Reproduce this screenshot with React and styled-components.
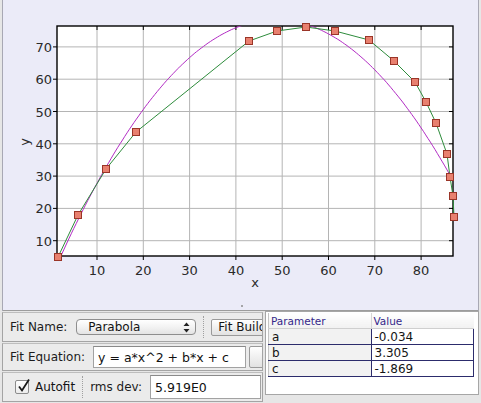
import styled, { createGlobalStyle } from 'styled-components';

const GlobalStyle = createGlobalStyle`
  html, body { margin: 0; padding: 0; background: #e6e6e6; }
  body {
    font-family: "DejaVu Sans", "Noto Sans", sans-serif;
    font-size: 12px;
    color: #141414;
  }
`;

// plot scale (data -> pixels, page coordinates)
const X = (x) => 50.7 + 4.63 * x;
const Y = (y) => 273 - 3.23 * y;
const PLOT = { left: 57, top: 26, right: 453, bottom: 256 };

const points = [
  [58, 257], [78, 215], [106, 169], [136, 132], [249, 41], [277, 31],
  [306, 27], [335, 31], [369, 40], [394, 61], [415, 82], [426, 102],
  [436, 123], [447, 154], [450, 177], [453, 196], [454, 217],
];

const fit = { a: -0.034, b: 3.305, c: -1.869 };

function parabolaPath() {
  const d = [];
  for (let x = 1; x <= 87.5; x += 0.5) {
    const y = fit.a * x * x + fit.b * x + fit.c;
    d.push(`${d.length ? 'L' : 'M'}${X(x).toFixed(1)},${Y(y).toFixed(1)}`);
  }
  return d.join(' ');
}

const Window = styled.div`
  width: 481px;
  height: 403px;
  display: flex;
  flex-direction: column;
  overflow: hidden;
  background: #e6e6e6;
`;

const ChartPane = styled.div`
  height: 311px;
  margin: 0 2px;
  border-left: 1px solid #a8a8b4;
  border-right: 1px solid #a8a8b4;
  background: #ebebf8;
  display: flex;
  flex-direction: column;

  svg {
    display: block;
  }
`;

const Divider = styled.div`
  flex: 1;
  display: flex;
  justify-content: center;
  align-items: center;
  border-bottom: 1px solid #9c9c9c;
`;

const Grip = styled.span`
  width: 2px;
  height: 2px;
  margin-left: 2px;
  border-radius: 1px;
  background: #8c8c8c;
`;

const AxisText = styled.text`
  font-family: "DejaVu Sans", sans-serif;
  font-size: 13px;
  fill: #2a2a2a;
`;

const BottomPane = styled.div`
  flex: 1;
  display: flex;
  min-height: 0;
`;

const Controls = styled.div`
  width: 261px;
  margin-left: 2px;
  display: flex;
  flex-direction: column;
  gap: 1px;
  padding-top: 1px;
`;

const Row = styled.div`
  height: ${(p) => p.$h}px;
  box-sizing: border-box;
  display: flex;
  align-items: center;
  padding-left: ${(p) => p.$pad || 7}px;
  border: 1px solid #a4a4a4;
  border-top-color: #bdbdbd;
  background: #ebebeb;
  overflow: hidden;
  white-space: nowrap;

  > * {
    flex: none;
  }
`;

const Label = styled.span`
  margin-right: ${(p) => p.$gap}px;
  color: #1c1c1c;
`;

const Combo = styled.div`
  width: 120px;
  height: 16px;
  box-sizing: border-box;
  border: 1px solid #8e8e8e;
  border-radius: 4px;
  background: linear-gradient(#ffffff, #f1f1f1 55%, #e4e4e4);
  display: flex;
  align-items: center;
  justify-content: space-between;
  padding: 0 5px 0 11px;
  font-size: 12px;
`;

const Separator = styled.span`
  width: 0;
  height: 22px;
  border-left: 1px dotted #a0a0a0;
  margin: 0 ${(p) => p.$l}px 0 ${(p) => p.$r}px;
`;

const Button = styled.div`
  width: ${(p) => p.$w}px;
  height: ${(p) => p.$h}px;
  margin-left: ${(p) => p.$ml || 0}px;
  box-sizing: border-box;
  border: 1px solid #9a9a9a;
  border-radius: 2px;
  background: linear-gradient(#ffffff, #f0f0f0 50%, #e2e2e2);
  padding-left: 6px;
  display: flex;
  align-items: center;
  font-size: 12px;
  overflow: hidden;
`;

const Field = styled.div`
  width: ${(p) => p.$w}px;
  height: ${(p) => p.$h}px;
  box-sizing: border-box;
  border: 1px solid #a2a2a2;
  border-top-color: #8a8a8a;
  background: #fff;
  padding-left: 4px;
  display: flex;
  align-items: center;
  font-size: 12.5px;
  color: #111;
`;

const CheckBox = styled.div`
  width: 14px;
  height: 14px;
  box-sizing: border-box;
  border: 1px solid #8c8c8c;
  border-radius: 2px;
  background: linear-gradient(#ffffff, #ececec);
  margin-right: 6px;
  position: relative;

  svg {
    position: absolute;
    left: 1px;
    top: -3px;
  }
`;

const TablePane = styled.div`
  flex: 1;
  margin: 0 2px 8px 2px;
  box-sizing: border-box;
  border: 1px solid #a6a6a6;
  background: #fff;
  padding: 1px 4px 0 2px;
`;

const Table = styled.table`
  width: 100%;
  border-collapse: collapse;
  table-layout: fixed;
`;

const HeadCell = styled.th`
  height: 15px;
  padding: 0 0 0 2px;
  text-align: left;
  font-weight: normal;
  font-size: 10.5px;
  color: #35288a;
  background: linear-gradient(#ffffff, #f1f1f1);
  border-left: ${(p) => (p.$first ? '1px solid #c4c4c4' : '1px solid #d6d6d6')};
  border-bottom: 1px solid #cfcfcf;
`;

const Cell = styled.td`
  height: 15px;
  padding: 0 0 0 3px;
  font-size: 12px;
  line-height: 14px;
  color: #151515;
  background: ${(p) => (p.$name ? '#f2f2f2' : '#ffffff')};
  border: 1px solid #2c2c6c;
  border-left-color: ${(p) => (p.$name ? '#c4c4c4' : '#2c2c6c')};
`;

function Chart() {
  const xs = [10, 20, 30, 40, 50, 60, 70, 80];
  const ys = [10, 20, 30, 40, 50, 60, 70];
  const line = points.map((p) => p.join(',')).join(' ');
  return (
    <svg width="475" height="301" viewBox="3 0 475 301">
      <defs>
        <clipPath id="plotClip">
          <rect x={PLOT.left} y={PLOT.top} width={PLOT.right - PLOT.left} height={PLOT.bottom - PLOT.top} />
        </clipPath>
      </defs>
      <rect x={PLOT.left} y={PLOT.top} width={PLOT.right - PLOT.left} height={PLOT.bottom - PLOT.top} fill="#fff" />
      {xs.map((v) => (
        <g key={`x${v}`}>
          <line x1={X(v)} x2={X(v)} y1={PLOT.top} y2={PLOT.bottom} stroke="#b4b4b4" />
          <line x1={X(v)} x2={X(v)} y1={PLOT.bottom} y2={PLOT.bottom + 4} stroke="#000" />
          <line x1={X(v)} x2={X(v)} y1={PLOT.top} y2={PLOT.top + 4} stroke="#000" />
          <AxisText x={X(v)} y={275} textAnchor="middle">{v}</AxisText>
        </g>
      ))}
      {ys.map((v) => (
        <g key={`y${v}`}>
          <line x1={PLOT.left} x2={PLOT.right} y1={Y(v)} y2={Y(v)} stroke="#b4b4b4" />
          <line x1={PLOT.left - 4} x2={PLOT.left} y1={Y(v)} y2={Y(v)} stroke="#000" />
          <line x1={PLOT.right - 4} x2={PLOT.right} y1={Y(v)} y2={Y(v)} stroke="#000" />
          <AxisText x={52} y={Y(v) + 5} textAnchor="end">{v}</AxisText>
        </g>
      ))}
      <rect x={PLOT.left} y={PLOT.top} width={PLOT.right - PLOT.left} height={PLOT.bottom - PLOT.top} fill="none" stroke="#000" strokeWidth="1.4" />
      <g clipPath="url(#plotClip)">
        <path d={parabolaPath()} fill="none" stroke="#b22cc4" strokeWidth="1" />
      </g>
      <polyline points={line} fill="none" stroke="#2e8c3c" strokeWidth="1" />
      {points.map(([px, py], i) => (
        <rect key={i} x={px - 3.5} y={py - 3.5} width="7" height="7" fill="#e8806f" stroke="#9a3528" strokeWidth="1" />
      ))}
      <AxisText x={255} y={287} textAnchor="middle">x</AxisText>
      <AxisText x={0} y={0} textAnchor="middle" transform="translate(29 142) rotate(-90)">y</AxisText>
    </svg>
  );
}

function UpDown() {
  return (
    <svg width="7" height="11" viewBox="0 0 7 11">
      <path d="M3.5 0.5 L6.5 4 L0.5 4 Z" fill="#222" />
      <path d="M3.5 10.5 L6.5 7 L0.5 7 Z" fill="#222" />
    </svg>
  );
}

export default function App() {
  const params = [
    ['a', '-0.034'],
    ['b', '3.305'],
    ['c', '-1.869'],
  ];
  return (
    <>
      <GlobalStyle />
      <Window>
        <ChartPane>
          <Chart />
          <Divider>
            <Grip />
          </Divider>
        </ChartPane>
        <BottomPane>
          <Controls>
            <Row $h={30}>
              <Label $gap={9}>Fit Name:</Label>
              <Combo>
                <span>Parabola</span>
                <UpDown />
              </Combo>
              <Separator $r={7} $l={7} />
              <Button $w={70} $h={17}>Fit Builder</Button>
            </Row>
            <Row $h={28}>
              <Label $gap={8}>Fit Equation:</Label>
              <Field $w={153} $h={22}>y = a*x^2 + b*x + c</Field>
              <Button $w={20} $h={22} $ml={3} />
            </Row>
            <Row $h={30} $pad={12}>
              <CheckBox>
                <svg width="14" height="15" viewBox="0 0 14 15">
                  <path d="M2 8.5 L5 12.5 L12 1.5" fill="none" stroke="#1a1a1a" strokeWidth="1.8" />
                </svg>
              </CheckBox>
              <span>Autofit</span>
              <Separator $r={7} $l={7} />
              <Label $gap={8}>rms dev:</Label>
              <Field $w={111} $h={24}>5.919E0</Field>
            </Row>
          </Controls>
          <TablePane>
            <Table>
              <thead>
                <tr>
                  <HeadCell $first>Parameter</HeadCell>
                  <HeadCell>Value</HeadCell>
                </tr>
              </thead>
              <tbody>
                {params.map(([name, value]) => (
                  <tr key={name}>
                    <Cell $name>{name}</Cell>
                    <Cell>{value}</Cell>
                  </tr>
                ))}
              </tbody>
            </Table>
          </TablePane>
        </BottomPane>
      </Window>
    </>
  );
}
